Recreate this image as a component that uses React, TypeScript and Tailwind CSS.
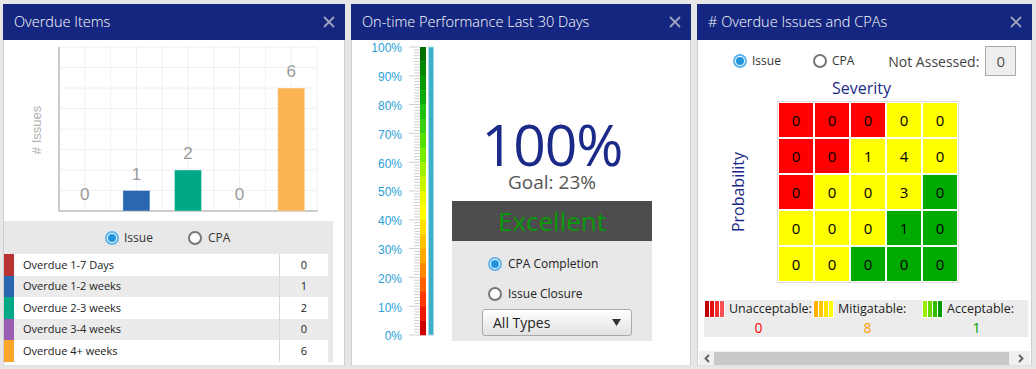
import React from 'react';

const sans = "font-['Open_Sans',sans-serif]";

function CloseX() {
  return (
    <svg width="12" height="12" viewBox="0 0 12 12">
      <path d="M1 1L11 11M11 1L1 11" stroke="#9ea3bd" strokeWidth="1.8" />
    </svg>
  );
}

function Radio({ checked }: { checked?: boolean }) {
  if (checked) {
    return (
      <span className="w-[14px] h-[14px] rounded-full border-2 border-[#5db4ea] bg-white flex items-center justify-center shrink-0">
        <span className="w-[8px] h-[8px] rounded-full bg-[#2193dd]" />
      </span>
    );
  }
  return <span className="w-[14px] h-[14px] rounded-full border-2 border-[#777] bg-white shrink-0" />;
}

function Panel({ title, width, children }: { title: string; width: string; children: React.ReactNode }) {
  return (
    <div className={`${width} flex flex-col shrink-0`}>
      <div className="h-[36px] bg-[#142680] flex items-center justify-between pl-[11px] pr-[10px]">
        <span className="text-white text-[14.5px] font-light">{title}</span>
        <CloseX />
      </div>
      <div className="h-[326px] bg-white border-x border-b border-x-[#cfcfcf] border-b-[#e2e2e2] overflow-hidden">
        {children}
      </div>
    </div>
  );
}

const bars = [
  { v: 0, c: '#b83232' },
  { v: 1, c: '#2a67b1' },
  { v: 2, c: '#00a885' },
  { v: 0, c: '#9a5fb5' },
  { v: 6, c: '#fbb454' },
];

const rows = [
  { label: 'Overdue 1-7 Days', v: 0, c: '#b83232' },
  { label: 'Overdue 1-2 weeks', v: 1, c: '#2a67b1' },
  { label: 'Overdue 2-3 weeks', v: 2, c: '#00a885' },
  { label: 'Overdue 3-4 weeks', v: 0, c: '#9a5fb5' },
  { label: 'Overdue 4+ weeks', v: 6, c: '#f9a62a' },
];

function OverdueChart() {
  const left = 55, right = 313, top = 7, bottom = 171;
  const colW = (right - left) / 10;
  const rowH = (bottom - top) / 8;
  return (
    <svg width="341" height="181" className="block">
      {Array.from({ length: 11 }).map((_, k) => (
        <line key={'v' + k} x1={left + k * colW} x2={left + k * colW} y1={top} y2={bottom} stroke="#f0f0f0" />
      ))}
      {Array.from({ length: 9 }).map((_, j) => (
        <line key={'h' + j} x1={left} x2={right} y1={bottom - j * rowH} y2={bottom - j * rowH} stroke="#f0f0f0" />
      ))}
      <line x1={left} x2={left} y1={top} y2={bottom + 1} stroke="#cccccc" strokeWidth="2" />
      <line x1={left} x2={right + 1} y1={bottom} y2={bottom} stroke="#cccccc" strokeWidth="2" />
      {bars.map((b, i) => {
        const cx = left + colW * (2 * i + 1);
        const h = b.v * rowH;
        return (
          <g key={i}>
            {h > 0 && <rect x={cx - 13.5} y={bottom - h} width="27" height={h} fill={b.c} stroke="rgba(255,255,255,0.35)" />}
            <text x={cx} y={bottom - h - 11} textAnchor="middle" fontSize="17" fill="#9a9a9a" fontFamily="Liberation Sans, sans-serif">
              {b.v}
            </text>
          </g>
        );
      })}
      <text x="0" y="0" transform="translate(37 90) rotate(-90)" textAnchor="middle" fontSize="13" fill="#b0b0b0" fontFamily="Liberation Sans, sans-serif">
        # Issues
      </text>
    </svg>
  );
}

const gaugeColors = [
  '#007000', '#008800', '#009a00', '#0aaa0a', '#20c010', '#38d010', '#55e000', '#77ec00', '#a0f000', '#c8f500',
  '#eefa00', '#ffff00', '#ffe000', '#ffc400', '#ffaa00', '#ff8800', '#ff6000', '#ff3800', '#f01800', '#cc0000',
];

function Gauge() {
  const top = 7, bottom = 295;
  const step = (bottom - top) / 100;
  const seg = (bottom - top) / 20;
  return (
    <svg width="100" height="305" className="block shrink-0">
      {Array.from({ length: 11 }).map((_, i) => (
        <text key={'l' + i} x="50" y={8 + i * 28.8 + 4.3} textAnchor="end" fontSize="12" fill="#2a9fd8" fontFamily="Liberation Sans, sans-serif">
          {100 - i * 10}%
        </text>
      ))}
      {Array.from({ length: 101 }).map((_, i) => (
        <line key={'t' + i} x1={i % 10 === 0 ? 57 : 62} x2="68" y1={top + i * step} y2={top + i * step} stroke="#d0d0d0" strokeWidth="1" />
      ))}
      {gaugeColors.map((c, i) => (
        <rect key={'s' + i} x="68" y={top + i * seg} width="6" height={seg + 0.3} fill={c} />
      ))}
      <rect x="76.5" y={top} width="5" height={bottom - top} fill="#3bb0c9" stroke="#a9dce8" strokeWidth="1" />
    </svg>
  );
}

const R = '#ff0000', Y = '#ffff00', G = '#00aa00';
const matrix: [string, number][][] = [
  [[R, 0], [R, 0], [R, 0], [Y, 0], [Y, 0]],
  [[R, 0], [R, 0], [Y, 1], [Y, 4], [Y, 0]],
  [[R, 0], [Y, 0], [Y, 0], [Y, 3], [G, 0]],
  [[Y, 0], [Y, 0], [Y, 0], [G, 1], [G, 0]],
  [[Y, 0], [Y, 0], [G, 0], [G, 0], [G, 0]],
];

function Swatch({ colors }: { colors: string[] }) {
  return (
    <div className="flex gap-[1px] bg-white p-[1px] h-[18px] shrink-0">
      {colors.map((c, i) => (
        <span key={i} className="w-[4px] h-full" style={{ background: c }} />
      ))}
    </div>
  );
}

const legend = [
  { label: 'Unacceptable:', v: 0, vc: 'text-[#ff0000]', colors: ['#c00000', '#e01010', '#f03030', '#f85050'] },
  { label: 'Mitigatable:', v: 8, vc: 'text-[#ff9900]', colors: ['#ffb000', '#ffc800', '#ffe000', '#ffff00'] },
  { label: 'Acceptable:', v: 1, vc: 'text-[#00a000]', colors: ['#99ee00', '#66d800', '#33bb00', '#009900'] },
];

export default function App() {
  return (
    <div className={`w-[1036px] h-[369px] overflow-hidden bg-[#e6e6e6] flex items-start pt-[4px] pl-[3px] gap-[6px] ${sans}`}>
      <Panel title="Overdue Items" width="w-[342px]">
        <OverdueChart />
        <div className="w-[329px] bg-[#e8e8e8] pr-[5px]">
          <div className="h-[33px] flex items-center pl-[101px] text-[12px] text-[#333]">
            <Radio checked />
            <span className="ml-[5px]">Issue</span>
            <span className="ml-[35px]" />
            <Radio />
            <span className="ml-[6px]">CPA</span>
          </div>
          {rows.map((r, i) => (
            <div key={i} className={`flex h-[21.6px] text-[11px] text-[#222] ${i % 2 === 0 ? 'bg-white' : 'bg-[#ebebeb]'}`}>
              <span className="w-[10px] h-full" style={{ background: r.c }} />
              <span className="flex-1 pl-[9px] flex items-center">{r.label}</span>
              <span className="w-[49px] flex items-center justify-center border-l border-[#d8d8d8]">{r.v}</span>
            </div>
          ))}
        </div>
      </Panel>

      <Panel title="On-time Performance Last 30 Days" width="w-[340px]">
        <div className="flex">
          <Gauge />
          <div className="w-[200px] flex flex-col pt-[79px]">
            <div className="text-[57px] leading-[50px] tracking-[-1px] text-center text-[#1b2a88]">100%</div>
            <div className="mt-[4px] text-[19px] leading-[19px] text-center text-[#555]">Goal: 23%</div>
            <div className="mt-[9px] h-[40px] bg-[#4d4d4d] flex items-center justify-center text-[26px] text-[#079a07]">
              Excellent
            </div>
            <div className="bg-[#e8e8e8] pt-[8px] pb-[5px] text-[12px] text-[#222]">
              <div className="h-[30px] flex items-center pl-[36px]">
                <Radio checked />
                <span className="ml-[6px]">CPA Completion</span>
              </div>
              <div className="h-[30px] flex items-center pl-[36px]">
                <Radio />
                <span className="ml-[6px]">Issue Closure</span>
              </div>
              <div className="ml-[30px] w-[150px] h-[27px] rounded-[3px] border border-[#aaaaaa] bg-linear-to-b from-white to-[#e2e2e2] flex items-center justify-between pl-[10px] pr-[10px] text-[14px]">
                <span>All Types</span>
                <svg width="9" height="7" viewBox="0 0 9 7">
                  <path d="M0 0H9L4.5 7Z" fill="#333" />
                </svg>
              </div>
            </div>
          </div>
        </div>
      </Panel>

      <Panel title="# Overdue Issues and CPAs" width="w-[335px]">
        <div className="mt-[6px] h-[30px] flex items-center pl-[35px] text-[12px] text-[#333]">
          <Radio checked />
          <span className="ml-[5px]">Issue</span>
          <span className="ml-[32px]" />
          <Radio />
          <span className="ml-[5px]">CPA</span>
          <span className="ml-[34px] text-[14px] text-[#444]">Not Assessed:</span>
          <span className="ml-[6px] w-[31px] h-[30px] bg-[#eeeeee] border border-[#aaaaaa] flex items-center justify-center text-[15px] text-[#555]">
            0
          </span>
        </div>
        <div className="mt-[3px] h-[19px] leading-[19px] text-[16px] text-[#1b2a88] pl-[134px]">Severity</div>
        <div className="mt-[3px] flex">
          <div className="w-[79px] flex items-center justify-end pr-[30px]">
            <span className="[writing-mode:vertical-rl] rotate-180 text-[16px] text-[#1b2a88] leading-[18px]">Probability</span>
          </div>
          <div className="border border-[#dddddd] p-[1px] grid grid-cols-5 gap-[2px]">
            {matrix.flat().map(([c, v], i) => (
              <div key={i} className="w-[34px] h-[34px] flex items-center justify-center text-[15px] text-black" style={{ background: c }}>
                {v}
              </div>
            ))}
          </div>
        </div>
        <div className="mt-[17px] ml-[6px] w-[324px] bg-[#ececec] flex">
          {legend.map((l, i) => (
            <div key={i} className="w-[109px] shrink-0 flex flex-col">
              <div className="h-[18px] flex items-center">
                <Swatch colors={l.colors} />
                <span className="ml-[4px] text-[12.5px] leading-[18px] text-[#222] whitespace-nowrap">{l.label}</span>
              </div>
              <div className={`h-[19px] leading-[19px] text-[14px] text-center ${l.vc}`}>{l.v}</div>
            </div>
          ))}
        </div>
        <div className="mt-[14px] ml-[1px] w-[331px] h-[15px] bg-[#f0f0f0] flex items-center">
          <div className="w-[15px] flex justify-center">
            <svg width="6" height="9" viewBox="0 0 6 9">
              <path d="M5 1L1.5 4.5L5 8" stroke="#666" strokeWidth="2" fill="none" />
            </svg>
          </div>
          <div className="w-[295px] h-[14px] bg-[#c8c8c8]" />
          <div className="flex-1 flex justify-end pr-[6px]">
            <svg width="6" height="9" viewBox="0 0 6 9">
              <path d="M1 1L4.5 4.5L1 8" stroke="#666" strokeWidth="2" fill="none" />
            </svg>
          </div>
        </div>
      </Panel>
    </div>
  );
}
